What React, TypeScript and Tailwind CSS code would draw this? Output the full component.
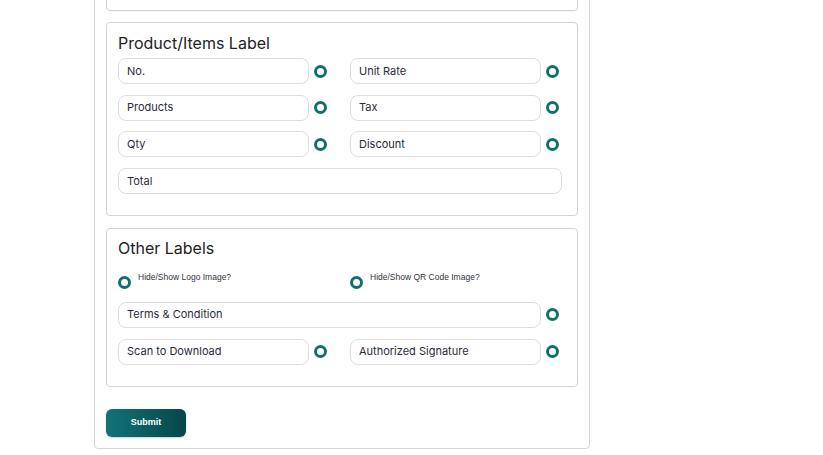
import React from "react";

function Radio({ className = "" }: { className?: string }) {
  return (
    <span
      className={
        "inline-block w-[13px] h-[13px] rounded-full border-[3px] border-[#126f70] bg-white shrink-0 " +
        className
      }
    />
  );
}

function Field({ label }: { label: string }) {
  return (
    <div className="flex-1 h-[26px] border border-[#dddddd] rounded-[8px] bg-white flex items-center pl-[8px] text-[11px] text-[#2b2b3a]">
      {label}
    </div>
  );
}

function FieldRadio({ label }: { label: string }) {
  return (
    <div className="flex items-center">
      <Field label={label} />
      <div className="w-[25px] flex justify-start pl-[5px]">
        <Radio />
      </div>
    </div>
  );
}

export default function App() {
  return (
    <div
      className="w-[823px] h-[455px] bg-white overflow-hidden"
      style={{ fontFamily: "Inter, 'Noto Sans', sans-serif" }}
    >
      <div className="ml-[94px] w-[496px] mt-[-40px] border border-[#d6d6d6] rounded-[4px] px-[11px] pt-[11px] pb-[11px] flex flex-col">
        <div className="h-[39px] border border-[#d3d3d3] rounded-[4px] shadow-[0_1px_1px_rgba(0,0,0,0.04)]" />
        <div className="mt-[11px] border border-[#d3d3d3] rounded-[4px] px-[11px] pt-[8px] pb-[21px]">
          <div className="text-[16px] text-[#222222] leading-[24px] mb-[3px]">Product/Items Label</div>
          <div className="grid grid-cols-2 gap-x-[16px] gap-y-[10.5px]">
            <FieldRadio label="No." />
            <FieldRadio label="Unit Rate" />
            <FieldRadio label="Products" />
            <FieldRadio label="Tax" />
            <FieldRadio label="Qty" />
            <FieldRadio label="Discount" />
          </div>
          <div className="mt-[11px] w-[444px] flex">
            <Field label="Total" />
          </div>
        </div>
        <div className="mt-[11.5px] border border-[#d3d3d3] rounded-[4px] px-[11px] pt-[7px] pb-[21px]">
          <div className="text-[16px] text-[#222222] leading-[24px]">Other Labels</div>
          <div className="grid grid-cols-2 gap-x-[16px] mt-[12px]">
            <div className="flex items-start">
              <Radio className="mt-[4px]" />
              <span
                className="ml-[7px] text-[8.5px] leading-[10px] text-[#333344]"
                style={{ fontFamily: "'Liberation Sans', Arial, sans-serif" }}
              >
                Hide/Show Logo Image?
              </span>
            </div>
            <div className="flex items-start">
              <Radio className="mt-[4px]" />
              <span
                className="ml-[7px] text-[8.5px] leading-[10px] text-[#333344]"
                style={{ fontFamily: "'Liberation Sans', Arial, sans-serif" }}
              >
                Hide/Show QR Code Image?
              </span>
            </div>
          </div>
          <div className="mt-[13px]">
            <FieldRadio label="Terms & Condition" />
          </div>
          <div className="grid grid-cols-2 gap-x-[16px] mt-[11px]">
            <FieldRadio label="Scan to Download" />
            <FieldRadio label="Authorized Signature" />
          </div>
        </div>
        <div className="mt-[22px]">
          <button
            className="w-[80px] h-[28px] rounded-[6px] bg-gradient-to-r from-[#127377] to-[#07464a] text-white text-[9px] font-bold flex items-center justify-center shadow-[0_1px_2px_rgba(0,0,0,0.2)]"
            style={{ fontFamily: "'Liberation Sans', Arial, sans-serif" }}
          >
            Submit
          </button>
        </div>
      </div>
    </div>
  );
}
